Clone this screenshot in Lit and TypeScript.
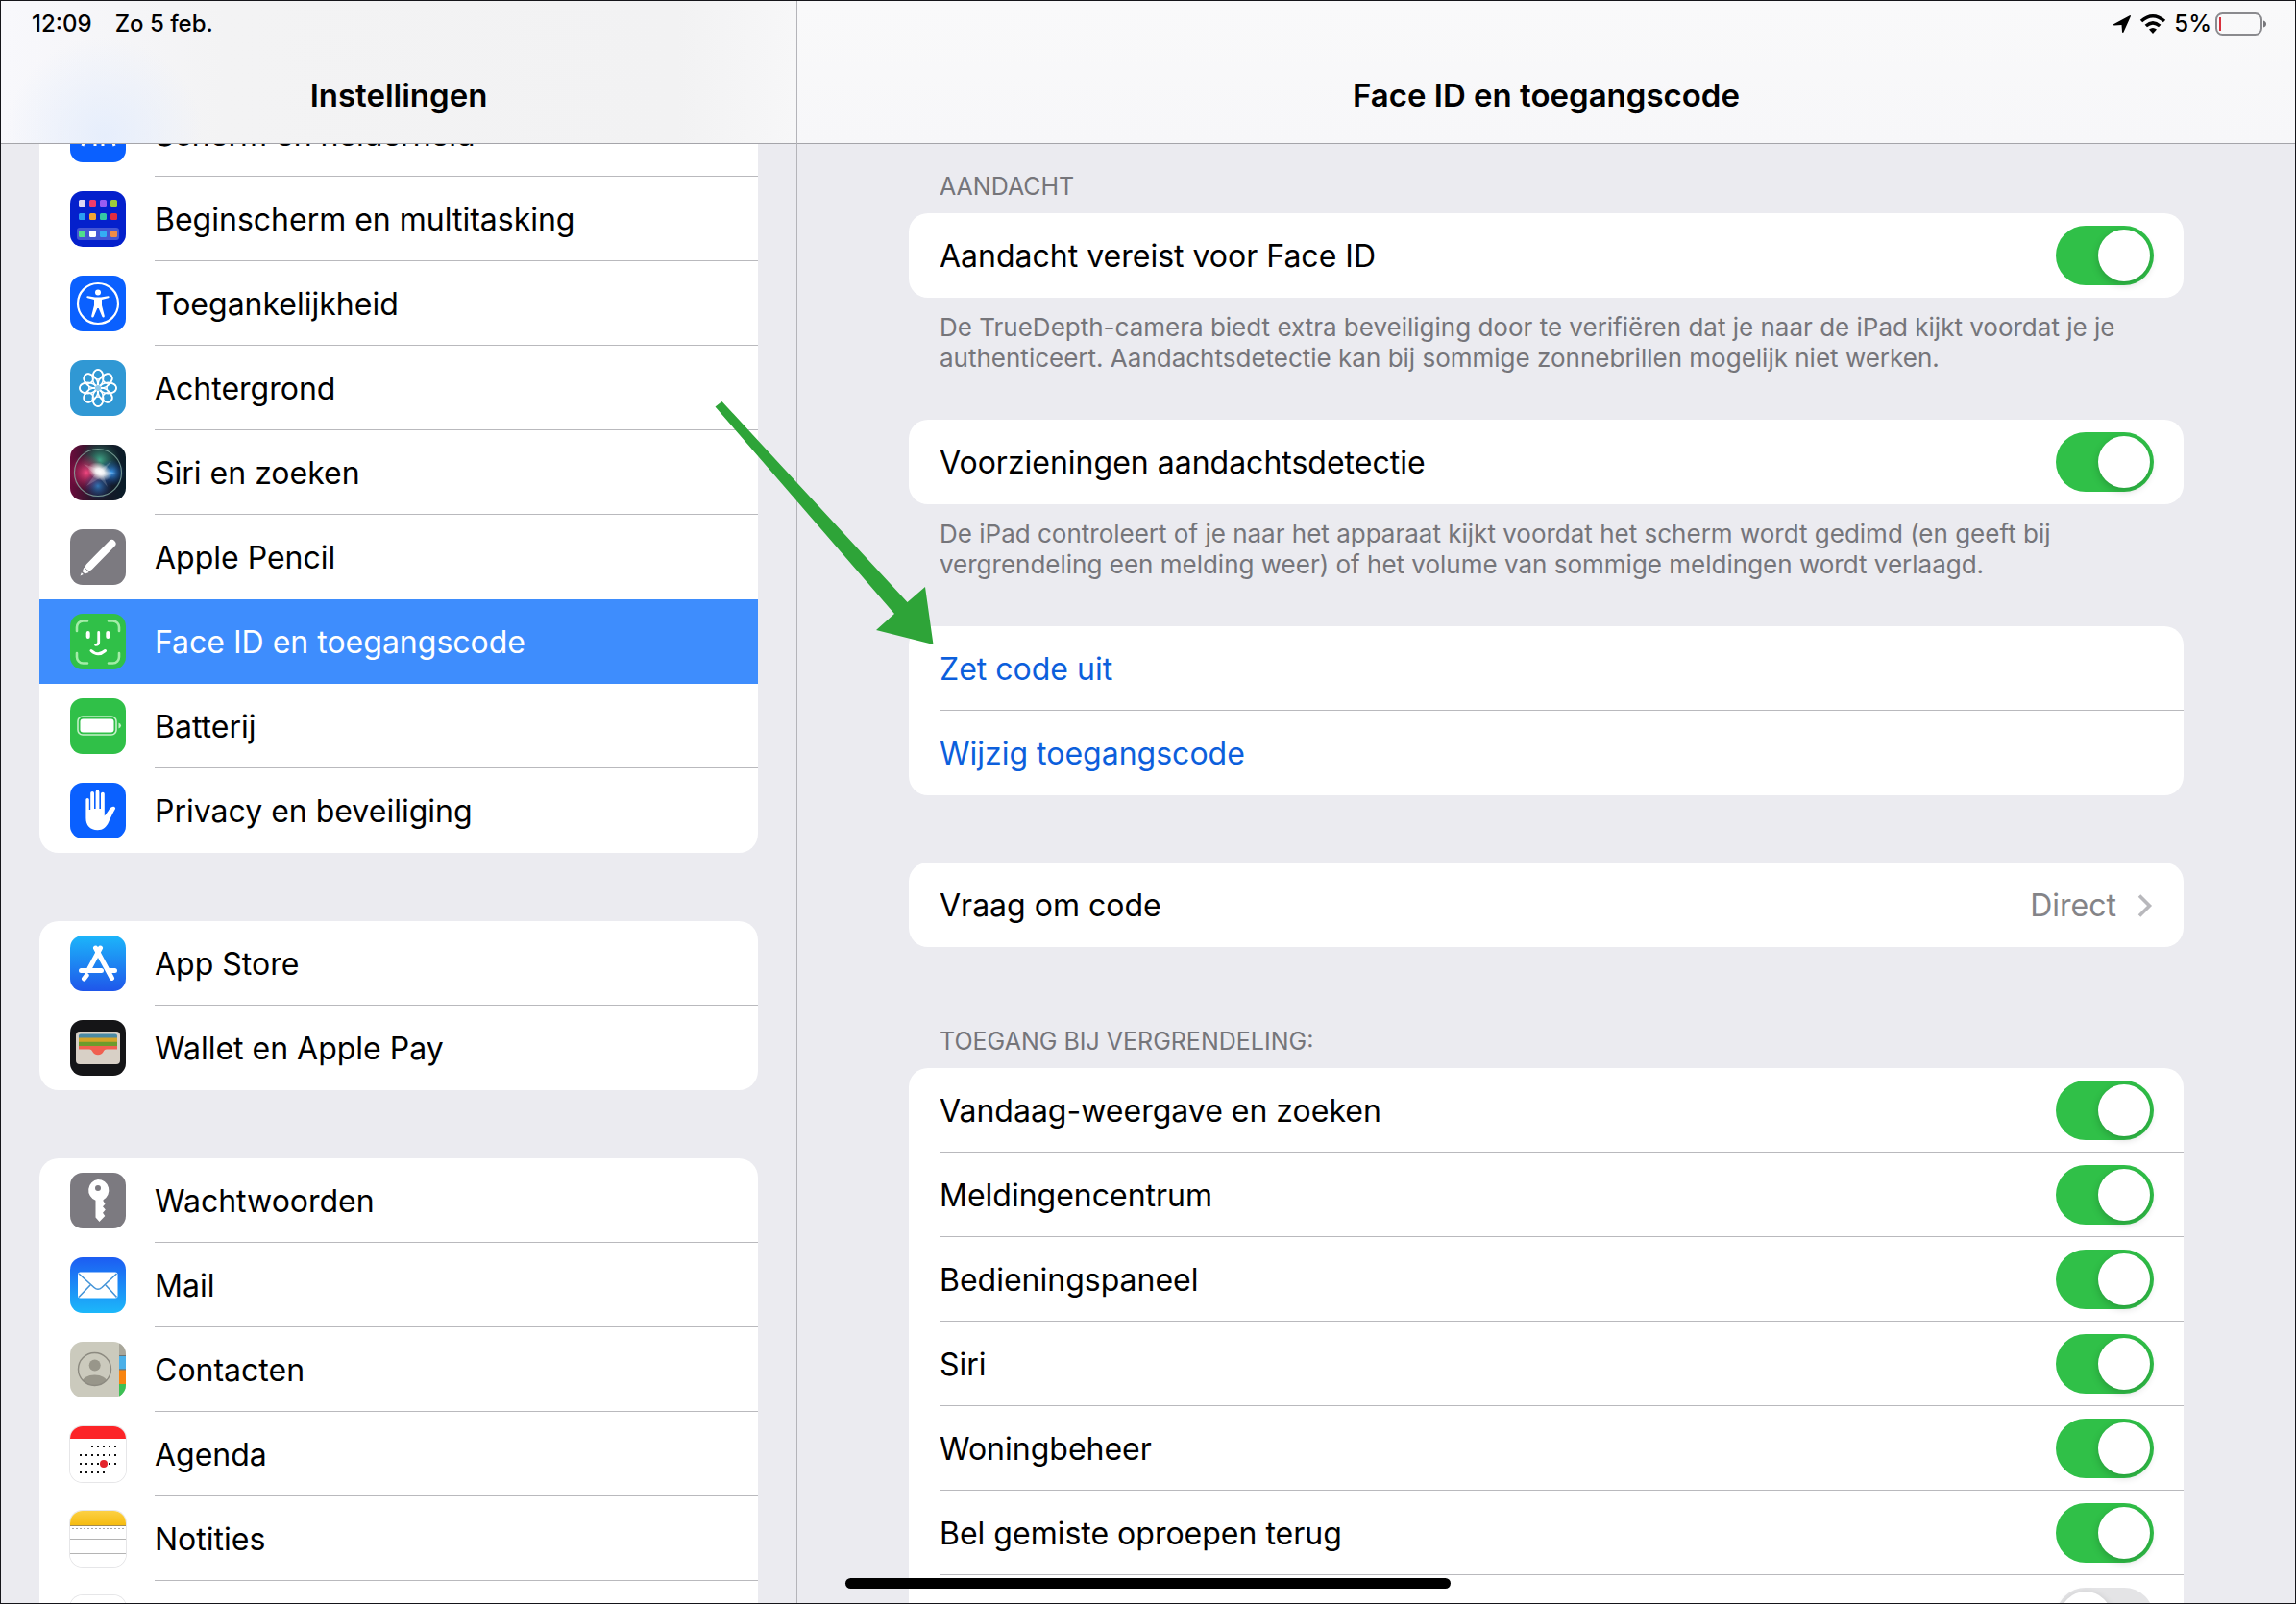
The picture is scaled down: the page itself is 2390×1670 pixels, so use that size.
import { LitElement, html, svg, css, nothing, type SVGTemplateResult } from "lit";
import { customElement, property } from "lit/decorators.js";
import { classMap } from "lit/directives/class-map.js";

const range = (n: number) => Array.from({ length: n }, (_, i) => i);

const homeColors = [
  ["#dcd6f4", "#f03c6c", "#9a5cf2", "#9ccc3c"],
  ["#2a9cf2", "#f2a436", "#34c8a4", "#e22c40"],
  ["#50e08c", "#ffffff", "#34aef4", "#f08c46"],
];

const handPath =
  "M16.4 17.6a1.7 1.7 0 0 1 3.4 0V28h1.4V10.8a1.9 1.9 0 0 1 3.8 0V27h1.6V9.4a1.9 1.9 0 0 1 3.8 0V27h1.6V11.6a1.9 1.9 0 0 1 3.8 0V34.5c1.6-1.6 3.4-4.6 5-7 1.3-2 3.4-3 5-2.6 1.4.4 1.6 1.6 1 2.6-2 3.4-4.4 8.4-6.6 13.2C37.8 46 34.4 49.2 28.6 49.2c-8 0-12.2-5-12.2-12.4z";

const glyphs: Record<string, SVGTemplateResult> = {
  display: svg`
    <rect width="58" height="58" fill="#0a60ff"/>
    <g stroke="#fff" stroke-width="3" fill="none"><path d="M13 41l6-19M26 41V20M34 41V20M46 41l-6-19"/></g>`,
  home: svg`
    <rect width="58" height="58" fill="#0420cc"/>
    <rect x="7" y="38" width="44" height="13" rx="3" fill="#4456d4"/>
    ${homeColors.map((row, r) =>
      row.map((c, i) => svg`<rect x=${9 + i * 11} y=${[9, 23, 41][r]} width="7" height="7" rx="1.5" fill=${c}/>`)
    )}`,
  access: svg`
    <rect width="58" height="58" fill="#0a60ff"/>
    <circle cx="29" cy="29" r="21" fill="none" stroke="#fff" stroke-width="2.2"/>
    <circle cx="29" cy="17.5" r="3" fill="#fff"/>
    <path d="M18.5 21.2l7.5 1.3h6l7.5-1.3c1.4-.2 1.7 1.7.3 2.1l-6.8 1.7v6l2.8 11c.3 1.5-1.8 2.1-2.4.7L29.7 34h-1.4l-3.7 8.700c-.6 1.4-2.7.8-2.4-.7l2.8-11v-6l-6.800-1.700c-1.4-.4-1.1-2.3.3-2.1z" fill="#fff"/>`,
  wallpaper: svg`
    <rect width="58" height="58" fill="#3098d4"/>
    <g fill="none" stroke="#fff" stroke-width="1.6">
      ${range(8).map((i) => svg`<ellipse cx="29" cy="18.5" rx="5.6" ry="8.6" transform=${`rotate(${i * 45} 29 29)`}/>`)}
      ${range(8).map((i) => svg`<circle cx="29" cy="15" r="5" transform=${`rotate(${i * 45} 29 29)`}/>`)}
    </g>
    <circle cx="29" cy="29" r="3" fill="#8cc8ea"/>`,
  siri: svg`
    <defs>
      <linearGradient id="siriBase" x1="0" y1="0" x2="1" y2="0">
        <stop offset="0" stop-color="#6c0c3c"/><stop offset=".45" stop-color="#201828"/><stop offset="1" stop-color="#081c28"/>
      </linearGradient>
      <radialGradient id="siriRed"><stop offset="0" stop-color="#f04880"/><stop offset="1" stop-color="#b01450" stop-opacity="0"/></radialGradient>
      <radialGradient id="siriGreen"><stop offset="0" stop-color="#40a488"/><stop offset="1" stop-color="#1c6450" stop-opacity="0"/></radialGradient>
      <radialGradient id="siriBlue"><stop offset="0" stop-color="#3c9cf0"/><stop offset="1" stop-color="#103c90" stop-opacity="0"/></radialGradient>
      <radialGradient id="siriGlow"><stop offset="0" stop-color="#fff"/><stop offset=".35" stop-color="#fff" stop-opacity=".9"/><stop offset="1" stop-color="#fff" stop-opacity="0"/></radialGradient>
    </defs>
    <rect width="58" height="58" fill="url(#siriBase)"/>
    <circle cx="31" cy="16" r="21" fill="url(#siriGreen)"/>
    <circle cx="17" cy="29" r="19" fill="url(#siriRed)"/>
    <circle cx="43" cy="29" r="14" fill="url(#siriBlue)"/>
    <circle cx="29" cy="43" r="15" fill="url(#siriBlue)" opacity=".7"/>
    <path d="M14 20l17 6 12-9-8 11 13 1-13 4 4 11-8-9-14 8 9-12z" fill="#fff" opacity=".18"/>
    <ellipse cx="31" cy="28" rx="13" ry="9" transform="rotate(25 31 28)" fill="url(#siriGlow)"/>
    <circle cx="29" cy="29" r="24.5" fill="none" stroke="#8cb4a8" stroke-width="1.2" opacity=".75"/>`,
  pencil: svg`
    <rect width="58" height="58" fill="#7c7a80"/>
    <path d="M20 39L43.5 15" stroke="#fff" stroke-width="8" stroke-linecap="round"/>
    <path d="M14.3 39.8l5.400 5.200-4.200 1.500-2.700-2.600zM11.8 45.2l2 1.9-3.3 1.5z" fill="#fff"/>`,
  face: svg`
    <rect width="58" height="58" fill="#30c048"/>
    <g fill="none" stroke-linecap="round" stroke-linejoin="round">
      <path d="M7 18v-4a6.500 6.500 0 0 1 6.500-6.500H18M40 7.500h4.500A6.500 6.500 0 0 1 51 14v4M51 41v4a6.500 6.500 0 0 1-6.500 6.500H40M18 51.500h-4.500A6.500 6.500 0 0 1 7 45v-4" stroke="#a4eca8" stroke-width="2.6"/>
      <path d="M18.7 20v4M39.3 20v4" stroke="#fff" stroke-width="4"/>
      <path d="M29.7 19.5v10.200q0 2.600-3.200 2.600" stroke="#fff" stroke-width="2.8"/>
      <path d="M22 38.500q7 6.500 14.500 0" stroke="#fff" stroke-width="3"/>
    </g>`,
  battery: svg`
    <rect width="58" height="58" fill="#30c048"/>
    <rect x="8" y="19" width="40" height="19" rx="5" fill="none" stroke="#c4f0c8" stroke-width="1.6"/>
    <rect x="10.5" y="21.5" width="35" height="14" rx="3" fill="#fff"/>
    <path d="M50.5 25.5q2.5 1 2.5 3t-2.5 3z" fill="#c4f0c8"/>`,
  privacy: svg`
    <rect width="58" height="58" fill="#0a60ff"/>
    <path d=${handPath} fill="#fff"/>`,
  store: svg`
    <defs><linearGradient id="storeBg" x1="0" y1="0" x2="0" y2="1"><stop offset="0" stop-color="#1cb6fa"/><stop offset="1" stop-color="#1f56ea"/></linearGradient></defs>
    <rect width="58" height="58" fill="url(#storeBg)"/>
    <path d="M31.5 13L20 34.5M17.2 41.5L14.5 45M26.5 13L43.5 44.5M11.5 36.5h21M40.5 36.5h6" stroke="#fff" stroke-width="5" stroke-linecap="round"/>`,
  wallet: svg`
    <rect width="58" height="58" fill="#151517"/>
    <rect x="6" y="12" width="46" height="34" rx="4" fill="#d8d0c6"/>
    <rect x="9" y="14.5" width="40" height="8" rx="2" fill="#4a8aa4"/>
    <path d="M9 18.5h40v5H9z" fill="#d4a428"/>
    <path d="M9 22.8h40v5H9z" fill="#6c9c2c"/>
    <path d="M9 27h40v3.500H38c-2 0-2.600 1-3.400 2.600-.9 1.900-2.700 3.100-5.600 3.100s-4.700-1.200-5.600-3.100c-.8-1.600-1.400-2.600-3.400-2.600H9z" fill="#f06050"/>`,
  key: svg`
    <rect width="58" height="58" fill="#7c7a80"/>
    <path fill-rule="evenodd" fill="#fff" d="M29 7a11.300 11.300 0 0 1 5.500 21.200v1.300l2 3-2.500 2.800 2.800 3.200-2.800 3.200 2.300 3.300-5.800 6-4-4.500V28.800A11.300 11.300 0 0 1 29 7zm0 6a3 3 0 1 0 0 6 3 3 0 0 0 0-6z"/>`,
  mail: svg`
    <defs><linearGradient id="mailBg" x1="0" y1="0" x2="0" y2="1"><stop offset="0" stop-color="#1c5cf2"/><stop offset="1" stop-color="#1cb8fa"/></linearGradient></defs>
    <rect width="58" height="58" fill="url(#mailBg)"/>
    <rect x="8" y="15.5" width="41.5" height="27" rx="2.5" fill="#fff"/>
    <path d="M9 17l16 14.500q4 3.500 8 0L48.500 17M9 41.500L21 29M48.500 41.500L37 29" fill="none" stroke="#4494d8" stroke-width="1.6"/>`,
  contacts: svg`
    <rect width="58" height="58" fill="#cbcabd"/>
    <path d="M51 0h7v15h-7z" fill="#a8a69a"/>
    <path d="M51 15h7v14h-7z" fill="#4cb0e8"/>
    <path d="M51 29h7v15h-7z" fill="#f88410"/>
    <path d="M51 44h7v14h-7z" fill="#3cc054"/>
    <path d="M51 14.5h7M51 28.8h7" stroke="#6c7474" stroke-width="1.2"/>
    <clipPath id="contactClip"><circle cx="25.5" cy="28.5" r="17"/></clipPath>
    <g clip-path="url(#contactClip)" fill="#98968a"><circle cx="25.7" cy="24.5" r="6"/><ellipse cx="25.5" cy="42" rx="13" ry="7.5"/></g>
    <circle cx="25.5" cy="28.5" r="17" fill="none" stroke="#8c8a80" stroke-width="1.4"/>`,
  calendar: svg`
    <rect width="58" height="58" fill="#fff"/>
    <path d="M0 0h58v13H0z" fill="#fc2428"/>
    ${[21, 30, 39, 48].map((y, r) =>
      range(7)
        .filter((c) => !(r === 0 && c < 2) && !(r === 3 && c > 4))
        .map((c) => svg`<rect x=${10 + c * 6} y=${y - 1} width="2" height="2" fill="#111"/>`)
    )}
    <circle cx="35" cy="39" r="4" fill="#e4242c"/>`,
  notes: svg`
    <defs><linearGradient id="notesBg" x1="0" y1="0" x2="0" y2="1"><stop offset="0" stop-color="#fcd044"/><stop offset="1" stop-color="#f6bc10"/></linearGradient></defs>
    <rect width="58" height="58" fill="#fff"/>
    <path d="M0 0h58v15H0z" fill="url(#notesBg)"/>
    <path d="M0 15.5h58" stroke="#a48c50"/>
    <path d="M2 18.5h56" stroke="#a8a8a8" stroke-dasharray="2 2"/>
    <path d="M0 29.5h58M0 44.5h58" stroke="#b4b4b4"/>`,
  blank: svg`<rect width="58" height="58" fill="#fff"/>`,
};

interface Entry {
  icon: string;
  label: string;
  hint?: string;
  outlined?: boolean;
  selected?: boolean;
}

const menu: Entry[][] = [
  [
    { icon: "display", label: "Scherm en helderheid" },
    { icon: "home", label: "Beginscherm en multitasking" },
    { icon: "access", label: "Toegankelijkheid" },
    { icon: "wallpaper", label: "Achtergrond" },
    { icon: "siri", label: "Siri en zoeken" },
    { icon: "pencil", label: "Apple Pencil" },
    { icon: "face", label: "Face ID en toegangscode", selected: true },
    { icon: "battery", label: "Batterij" },
    { icon: "privacy", label: "Privacy en beveiliging" },
  ],
  [
    { icon: "store", label: "App Store" },
    { icon: "wallet", label: "Wallet en Apple Pay" },
  ],
  [
    { icon: "key", label: "Wachtwoorden" },
    { icon: "mail", label: "Mail" },
    { icon: "contacts", label: "Contacten" },
    { icon: "calendar", label: "Agenda", outlined: true },
    { icon: "notes", label: "Notities", outlined: true },
    { icon: "blank", label: "", hint: "Herinneringen", outlined: true },
  ],
];

const lockAccess = [
  "Vandaag-weergave en zoeken",
  "Meldingencentrum",
  "Bedieningspaneel",
  "Siri",
  "Woningbeheer",
  "Bel gemiste oproepen terug",
];

const base = css`
  * {
    box-sizing: border-box;
  }
  .card {
    margin: 0;
    padding: 0;
    list-style: none;
    background: #fff;
    border-radius: 20px;
    overflow: hidden;
  }
`;

@customElement("menu-row")
class MenuRow extends LitElement {
  @property({ attribute: false }) entry!: Entry;

  static styles = [
    base,
    css`
      :host {
        display: block;
      }
      .row {
        display: flex;
        align-items: center;
        gap: 30px;
        height: 88px;
        padding-left: 32px;
        color: #000;
        text-decoration: none;
      }
      .icon {
        display: block;
        flex: none;
        width: 58px;
        height: 58px;
        border-radius: 13px;
        overflow: hidden;
      }
      .outlined {
        box-shadow: 0 0 0 1px #e6e6e8;
      }
      .label {
        flex: 1;
        align-self: stretch;
        display: flex;
        align-items: center;
        padding-top: 2px;
        border-bottom: 1px solid var(--line, #b9b9bd);
      }
      .selected {
        background: #3e8dfd;
        color: #fff;
      }
    `,
  ];

  render() {
    const { icon, label, hint, outlined, selected } = this.entry;
    return html`<a
      class=${classMap({ row: true, selected: !!selected })}
      href="#"
      aria-label=${hint ?? nothing}
      aria-current=${selected ? "page" : nothing}
    >
      <svg class=${classMap({ icon: true, outlined: !!outlined })} viewBox="0 0 58 58" aria-hidden="true">${glyphs[icon]}</svg>
      <span class="label">${label}</span>
    </a>`;
  }
}

@customElement("toggle-row")
class ToggleRow extends LitElement {
  @property() label = "";
  @property() hint = "";
  @property({ type: Boolean }) on = false;

  static styles = [
    base,
    css`
      :host {
        display: block;
      }
      .row {
        display: flex;
        align-items: center;
        justify-content: space-between;
        height: 88px;
        margin-left: 32px;
        padding-right: 31px;
        border-bottom: 1px solid var(--line, #b9b9bd);
      }
      .text {
        padding-top: 2px;
      }
      .switch {
        appearance: none;
        flex: none;
        display: flex;
        width: 102px;
        height: 62px;
        margin: 0;
        padding: 4px;
        border-radius: 31px;
        background: #e4e4e6;
      }
      .switch::before {
        content: "";
        width: 54px;
        height: 54px;
        border-radius: 50%;
        background: #fff;
        box-shadow: 0 3px 8px rgba(0, 0, 0, 0.2);
      }
      .switch:checked {
        justify-content: flex-end;
        background: #30c048;
      }
    `,
  ];

  render() {
    return html`<label class="row">
      <span class="text">${this.label}</span>
      <input class="switch" type="checkbox" role="switch" .checked=${this.on} aria-label=${this.hint || nothing} />
    </label>`;
  }
}

@customElement("app-root")
class AppRoot extends LitElement {
  static styles = [
    base,
    css`
      :host {
        display: block;
        font-family: Inter, "Liberation Sans", sans-serif;
        font-size: 32px;
        line-height: 40px;
        color: #000;
      }
      .screen {
        position: relative;
        display: grid;
        grid-template-columns: minmax(0, 829fr) minmax(0, 1559fr);
        height: 100vh;
        border: 1px solid #15151a;
        background: #ebebf0;
        overflow: hidden;
      }
      .pane {
        display: grid;
        grid-template-rows: auto minmax(0, 1fr);
        min-height: 0;
      }
      .side {
        border-right: 1px solid #b4b4b9;
      }
      .bar {
        border-bottom: 1px solid #a5a5aa;
        background: linear-gradient(#f9f9fa, #f7f7f9);
      }
      .side .bar {
        background: radial-gradient(circle at 13% 95%, #e6eefc, rgba(238, 242, 252, 0) 14%),
          linear-gradient(90deg, #f8f8fc, #f3f3f4 28%, #f2f2f3 85%, #f7f7f8);
      }
      .status {
        display: flex;
        align-items: center;
        gap: 24px;
        height: 48px;
        padding: 0 29px 0 32px;
        font-size: 24px;
        font-weight: 500;
        line-height: 28px;
      }
      .signals {
        justify-content: flex-end;
        gap: 8px;
      }
      .signals svg {
        display: block;
      }
      .charge {
        display: flex;
        align-items: center;
        gap: 4px;
      }
      .title {
        margin: 0;
        padding: 30px 0;
        font-size: 33px;
        font-weight: 600;
        line-height: 40px;
        text-align: center;
      }
      .view {
        overflow: hidden;
      }
      .menu {
        display: flex;
        flex-direction: column;
        gap: 71px;
        margin-top: -54px;
        padding: 0 40px;
      }
      .menu .card > :last-child,
      .last {
        --line: transparent;
      }
      .before-selected,
      .is-selected {
        --line: transparent;
      }
      .detail {
        display: flex;
        flex-direction: column;
        padding: 28px 116px 0;
      }
      .caption {
        margin: 0;
        padding: 0 32px 12px;
        font-size: 25px;
        font-weight: 400;
        line-height: 32px;
        color: #75757a;
      }
      .note {
        margin: 0;
        padding: 15px 32px 48px;
        font-size: 26px;
        line-height: 32px;
        color: #75757a;
      }
      .actions {
        margin-bottom: 70px;
      }
      .code {
        margin-bottom: 82px;
      }
      .action {
        display: block;
        width: calc(100% - 32px);
        height: 88px;
        margin-left: 32px;
        padding: 2px 0 0;
        border: 0;
        border-bottom: 1px solid var(--line, #b9b9bd);
        background: none;
        font: inherit;
        text-align: left;
        color: #0c5fdc;
      }
      .pick {
        display: flex;
        align-items: center;
        gap: 20px;
        width: 100%;
        height: 88px;
        padding: 1px 32px 0;
        border: 0;
        background: none;
        font: inherit;
        color: inherit;
      }
      .value {
        margin-left: auto;
        color: #848488;
      }
      .chevron {
        display: block;
      }
      .open {
        border-radius: 20px 20px 0 0;
      }
      .arrow {
        position: absolute;
        left: 742px;
        top: 416px;
        pointer-events: none;
      }
      .indicator {
        position: absolute;
        left: 50%;
        bottom: 15px;
        width: 630px;
        height: 11px;
        margin-left: -315px;
        border-radius: 6px;
        background: #000;
      }
    `,
  ];

  private group(entries: Entry[]) {
    const picked = entries.findIndex((e) => e.selected);
    return html`<ul class="card">
      ${entries.map(
        (entry, i) => html`<li
          class=${classMap({
            "is-selected": i === picked,
            "before-selected": picked > 0 && i === picked - 1,
          })}
        >
          <menu-row .entry=${entry}></menu-row>
        </li>`
      )}
    </ul>`;
  }

  render() {
    return html`<div class="screen">
      <nav class="pane side">
        <header class="bar">
          <div class="status"><span>12:09</span><span>Zo 5 feb.</span></div>
          <h1 class="title">Instellingen</h1>
        </header>
        <div class="view"><div class="menu">${menu.map((g) => this.group(g))}</div></div>
      </nav>

      <main class="pane">
        <header class="bar">
          <div class="status signals">
            <svg width="20" height="20" viewBox="0 0 20 20" aria-hidden="true">
              <path d="M1 10.2L17.8 1.2q1.5-.5 1 1L11.5 18.500q-1.200 1.400-1.500-.5L9.500 11 2 11.400q-2.200-.4-1-1.200z" />
            </svg>
            <svg width="28" height="22" viewBox="0 0 28 22" aria-hidden="true">
              <path d="M2 8q12-10.500 24 0M6.800 13q7.200-6.200 14.400 0" fill="none" stroke="#000" stroke-width="3.6" />
              <path d="M10 16.600q4-3.200 8 0L14 21z" />
            </svg>
            <div class="charge">
              <span>5%</span>
              <svg width="54" height="26" viewBox="0 0 54 26" aria-hidden="true">
                <rect x="1" y="2" width="47" height="22" rx="6.5" fill="none" stroke="#8a8a8e" stroke-width="2" />
                <path d="M4 6h2v14H4z" fill="#d8303c" />
                <path d="M50 9.500q3 1 3 3.500t-3 3.500z" fill="#77777b" />
              </svg>
            </div>
          </div>
          <h2 class="title">Face ID en toegangscode</h2>
        </header>

        <div class="view">
          <div class="detail">
            <h3 class="caption">AANDACHT</h3>
            <div class="card"><toggle-row class="last" label="Aandacht vereist voor Face ID" on></toggle-row></div>
            <p class="note">
              De TrueDepth-camera biedt extra beveiliging door te verifiëren dat je naar de iPad kijkt voordat je je
              authenticeert. Aandachtsdetectie kan bij sommige zonnebrillen mogelijk niet werken.
            </p>
            <div class="card"><toggle-row class="last" label="Voorzieningen aandachtsdetectie" on></toggle-row></div>
            <p class="note">
              De iPad controleert of je naar het apparaat kijkt voordat het scherm wordt gedimd (en geeft bij
              vergrendeling een melding weer) of het volume van sommige meldingen wordt verlaagd.
            </p>
            <div class="card actions">
              <button class="action" type="button">Zet code uit</button>
              <button class="action last" type="button">Wijzig toegangscode</button>
            </div>
            <div class="card code">
              <button class="pick" type="button">
                <span>Vraag om code</span>
                <span class="value">Direct</span>
                <svg class="chevron" width="18" height="26" viewBox="0 0 18 26" aria-hidden="true">
                  <path d="M4 2.500L14.500 13 4 23.500" fill="none" stroke="#b8b8bc" stroke-width="3.6" />
                </svg>
              </button>
            </div>
            <h3 class="caption">TOEGANG BIJ VERGRENDELING:</h3>
            <div class="card open">
              ${lockAccess.map((label) => html`<toggle-row label=${label} on></toggle-row>`)}
              <toggle-row hint="Accessoires"></toggle-row>
            </div>
          </div>
        </div>
      </main>

      <svg class="arrow" width="232" height="258" viewBox="743 417 232 258" aria-hidden="true">
        <path d="M751.5 418L744.5 423.5 931 639 912 656 971.5 671 963 611 944.5 627z" fill="#2ea438" />
      </svg>
      <div class="indicator"></div>
    </div>`;
  }
}
